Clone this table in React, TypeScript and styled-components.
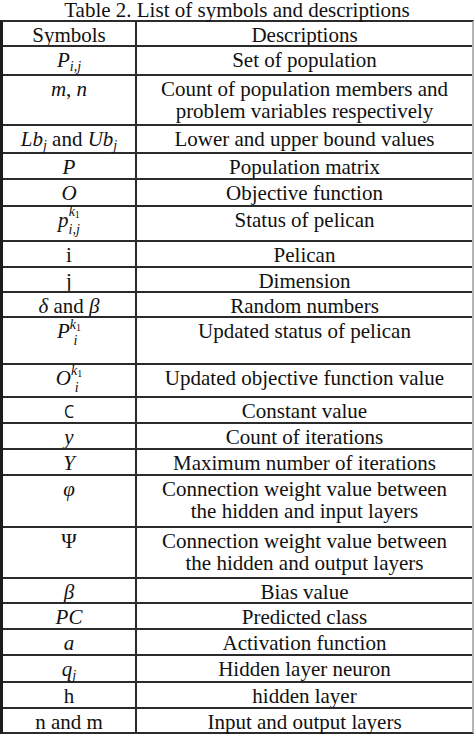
import React from "react";
import styled, { createGlobalStyle } from "styled-components";

const GlobalStyle = createGlobalStyle`
  html, body {
    margin: 0;
    padding: 0;
    background: #fff;
  }
  body {
    font-family: "Liberation Serif", "Times New Roman", serif;
    color: #111;
  }
`

const Page = styled.div`
  width: 474px;
  height: 735px;
  overflow: hidden;
  background: #fff;
`

const Caption = styled.div`
  height: 20px;
  font-size: 21px;
  line-height: 20px;
  text-align: center;
`

const Table = styled.div`
  display: flex;
  flex-direction: column;
  border-top: 2px solid #2b2b2b;
  border-bottom: 2px solid #2b2b2b;
  border-left: 3px solid #1c1c1c;
  border-right: 2px solid #b4b4b4;
`

const Row = styled.div<{ $h: number; $first?: boolean }>`
  display: grid;
  grid-template-columns: 132px 1fr;
  box-sizing: border-box;
  height: ${(p) => p.$h}px;
  border-top: ${(p) => (p.$first ? "0" : "2px solid #2b2b2b")};
`

const Cell = styled.div`
  padding-top: 2px;
  font-size: 21px;
  line-height: 22px;
  text-align: center;
  white-space: nowrap;
`

const DescCell = styled(Cell)`
  border-left: 2px solid #2b2b2b;
`

// math bits
const It = styled.i`
  font-style: italic;
`
const Sub = styled.span`
  position: relative;
  top: 4px;
  font-size: 14px;
  line-height: 1;
  font-style: italic;
`
const Scripts = styled.span`
  display: inline-grid;
  font-size: 14px;
  line-height: 14px;
  font-style: italic;
  & > span {
    grid-area: 1 / 1;
    position: relative;
  }
`
const Upper = styled.span<{ $dy: number }>`
  top: ${(p) => p.$dy}px;
`
const Lower = styled.span<{ $dy: number }>`
  top: ${(p) => p.$dy}px;
`
const Tiny = styled.span`
  position: relative;
  top: 2px;
  font-size: 10px;
  font-style: normal;
`
const SansC = styled.span`
  display: inline-block;
  font-family: "Open Sans", "Liberation Sans", sans-serif;
  font-size: 19px;
  transform: scaleX(0.85);
`

const K1 = () => (
  <>
    k<Tiny>1</Tiny>
  </>
)

type Entry = {
  h: number
  sym: React.ReactNode
  desc: React.ReactNode
}

const rows: Entry[] = [
  {
    h: 29,
    sym: (
      <>
        <It>P</It>
        <Sub>i,j</Sub>
      </>
    ),
    desc: "Set of population",
  },
  {
    h: 50,
    sym: (
      <>
        <It>m</It>, <It>n</It>
      </>
    ),
    desc: (
      <>
        Count of population members and
        <br />
        problem variables respectively
      </>
    ),
  },
  {
    h: 28,
    sym: (
      <>
        <It>Lb</It>
        <Sub>j</Sub> and <It>Ub</It>
        <Sub>j</Sub>
      </>
    ),
    desc: "Lower and upper bound values",
  },
  { h: 26, sym: <It>P</It>, desc: "Population matrix" },
  { h: 27, sym: <It>O</It>, desc: "Objective function" },
  {
    h: 35,
    sym: (
      <>
        <It>p</It>
        <Scripts>
          <Upper $dy={-11}>
            <K1 />
          </Upper>
          <Lower $dy={7}>i,j</Lower>
        </Scripts>
      </>
    ),
    desc: "Status of pelican",
  },
  { h: 26, sym: "i", desc: "Pelican" },
  { h: 25, sym: "j", desc: "Dimension" },
  {
    h: 25,
    sym: (
      <>
        <It>δ</It> and <It>β</It>
      </>
    ),
    desc: "Random numbers",
  },
  {
    h: 47,
    sym: (
      <>
        <It>P</It>
        <Scripts>
          <Upper $dy={-9}>
            <K1 />
          </Upper>
          <Lower $dy={7}>i</Lower>
        </Scripts>
      </>
    ),
    desc: "Updated status of pelican",
  },
  {
    h: 33,
    sym: (
      <>
        <It>O</It>
        <Scripts>
          <Upper $dy={-10}>
            <K1 />
          </Upper>
          <Lower $dy={7}>i</Lower>
        </Scripts>
      </>
    ),
    desc: "Updated objective function value",
  },
  { h: 26, sym: <SansC>C</SansC>, desc: "Constant value" },
  { h: 26, sym: <It>y</It>, desc: "Count of iterations" },
  { h: 26, sym: <It>Y</It>, desc: "Maximum number of iterations" },
  {
    h: 52,
    sym: <It>φ</It>,
    desc: (
      <>
        Connection weight value between
        <br />
        the hidden and input layers
      </>
    ),
  },
  {
    h: 51,
    sym: "Ψ",
    desc: (
      <>
        Connection weight value between
        <br />
        the hidden and output layers
      </>
    ),
  },
  { h: 25, sym: <It>β</It>, desc: "Bias value" },
  { h: 26, sym: <It>PC</It>, desc: "Predicted class" },
  { h: 26, sym: <It>a</It>, desc: "Activation function" },
  {
    h: 27,
    sym: (
      <>
        <It>q</It>
        <Sub>j</Sub>
      </>
    ),
    desc: "Hidden layer neuron",
  },
  { h: 26, sym: "h", desc: "hidden layer" },
  { h: 25, sym: "n and m", desc: "Input and output layers" },
]

export default function App() {
  return (
    <Page>
      <GlobalStyle />
      <Caption>Table 2. List of symbols and descriptions</Caption>
      <Table>
        <Row $h={23} $first>
          <Cell>Symbols</Cell>
          <DescCell>Descriptions</DescCell>
        </Row>
        {rows.map((r, i) => (
          <Row key={i} $h={r.h}>
            <Cell>{r.sym}</Cell>
            <DescCell>{r.desc}</DescCell>
          </Row>
        ))}
      </Table>
    </Page>
  )
}
